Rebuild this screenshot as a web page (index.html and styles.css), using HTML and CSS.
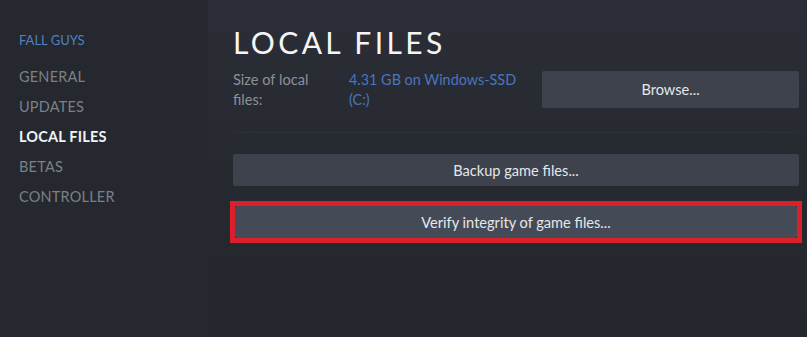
FILE: index.html
```html
<!DOCTYPE html>
<html>
<head>
<meta charset="utf-8">
<link rel="stylesheet" href="styles.css">
</head>
<body>
<div class="app">
  <nav class="sidebar">
    <div class="game">FALL GUYS</div>
    <ul class="menu">
      <li>GENERAL</li>
      <li>UPDATES</li>
      <li class="active">LOCAL FILES</li>
      <li>BETAS</li>
      <li>CONTROLLER</li>
    </ul>
  </nav>
  <main class="main">
    <h1 class="title">LOCAL FILES</h1>
    <div class="size-row">
      <div class="label">Size of local<br>files:</div>
      <div class="value">4.31 GB on Windows-SSD<br>(C:)</div>
      <button class="btn browse">Browse...</button>
    </div>
    <button class="btn wide backup">Backup game files...</button>
    <div class="highlight">
      <button class="btn wide verify">Verify integrity of game files...</button>
    </div>
  </main>
</div>
</body>
</html>
```

FILE: styles.css
```css
* { box-sizing: border-box; }
html, body { margin: 0; padding: 0; }
body {
  width: 807px;
  height: 337px;
  overflow: hidden;
  background: #24272d;
  font-family: Lato, "Open Sans", sans-serif;
}
.app {
  display: flex;
  height: 337px;
}
.sidebar {
  flex: 0 0 208px;
  width: 208px;
  background: #25282e;
  padding: 32px 0 0 19px;
}
.game {
  color: #4f82c0;
  font-size: 13px;
  line-height: 16px;
}
.menu {
  list-style: none;
  margin: 14px 0 0;
  padding: 0;
}
.menu li {
  color: #7b8087;
  font-size: 14.5px;
  line-height: 30px;
  letter-spacing: 0.2px;
}
.menu li.active {
  color: #f2f3f4;
  font-weight: bold;
}
.main {
  flex: 1 1 auto;
  min-width: 0;
  background: linear-gradient(180deg, #2b2e36 0%, #262930 50%, #24272d 100%);
  padding: 0 8px 0 25px;
}
.title {
  margin: 25px 0 0;
  color: #f4f5f6;
  font-weight: 400;
  font-size: 30px;
  line-height: 34px;
  letter-spacing: 3.4px;
}
.size-row {
  display: flex;
  align-items: flex-start;
  margin-top: 11px;
  padding-bottom: 22px;
  border-bottom: 1px solid #2c3038;
}
.label {
  width: 116px;
  color: #8c9197;
  font-size: 14.6px;
  line-height: 20px;
}
.value {
  width: 193px;
  color: #4a75bf;
  font-size: 14.4px;
  line-height: 20px;
}
.btn {
  display: block;
  border: 0;
  border-radius: 2px;
  background: #3d424d;
  color: #e4e7ea;
  font-family: Lato, "Open Sans", sans-serif;
  font-size: 14.6px;
  padding: 0;
  cursor: pointer;
}
.browse {
  width: 257px;
  height: 37px;
  margin-top: 1px;
}
.wide {
  width: 566px;
}
.backup {
  height: 32px;
  margin-top: 21px;
}
.highlight {
  margin: 15px 0 0 -3px;
  width: 572px;
  border: 5px solid #d9202b;
}
.verify {
  width: 100%;
  height: 32px;
  background: #454b56;
}
```
